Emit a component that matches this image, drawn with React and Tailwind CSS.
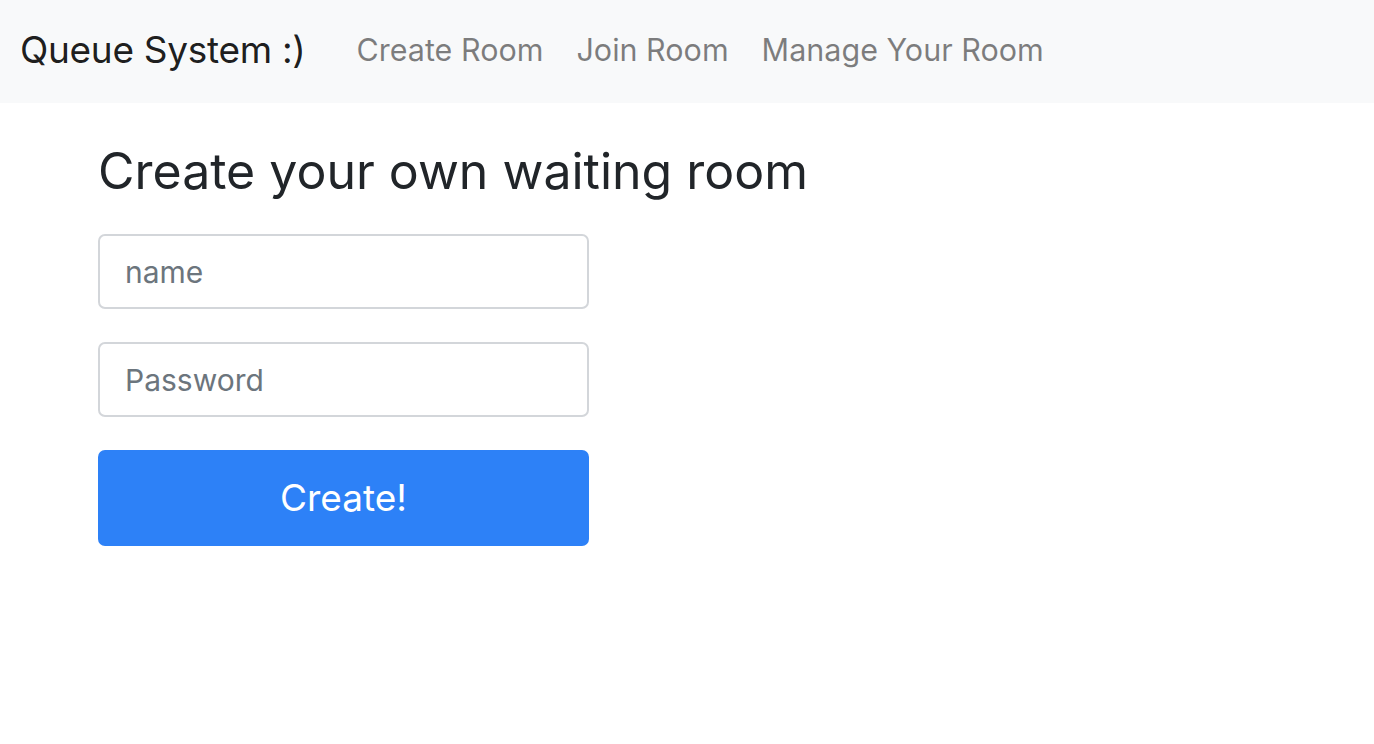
import React from "react";

const font = { fontFamily: "Inter, 'Noto Sans', sans-serif" };

const App = () => {
  return (
    <div className="min-h-[744px] bg-white" style={font}>
      <nav className="flex h-[103px] items-center bg-[#f8f9fa] px-[20px] pb-[4px]">
        <a className="text-[37px] text-black/90 tracking-[-0.3px]" href="#">
          Queue System :)
        </a>
        <div className="ml-[51px] flex items-center gap-[33px] text-[30.5px] text-black/50">
          <a href="#">Create Room</a>
          <a href="#">Join Room</a>
          <a href="#">Manage Your Room</a>
        </div>
      </nav>

      <div className="pl-[98px] pt-[32px]">
        <h1 className="text-[50px] leading-[72px] text-[#212529]">
          Create your own waiting room
        </h1>
        <form className="mt-[27px] flex w-[491px] flex-col gap-[33px]">
          <input
            className="h-[75px] w-full rounded-[7px] border-2 border-[#d3d6da] px-[25px] text-[30px] text-[#495057] placeholder:text-[#6c757d] outline-none"
            placeholder="name"
          />
          <input
            type="password"
            className="h-[75px] w-full rounded-[7px] border-2 border-[#d3d6da] px-[25px] text-[30px] text-[#495057] placeholder:text-[#6c757d] outline-none"
            placeholder="Password"
          />
          <button
            type="button"
            className="h-[96px] w-full rounded-[7px] bg-[#2d81f7] text-[37px] text-white"
          >
            Create!
          </button>
        </form>
      </div>
    </div>
  );
};

export default App;
